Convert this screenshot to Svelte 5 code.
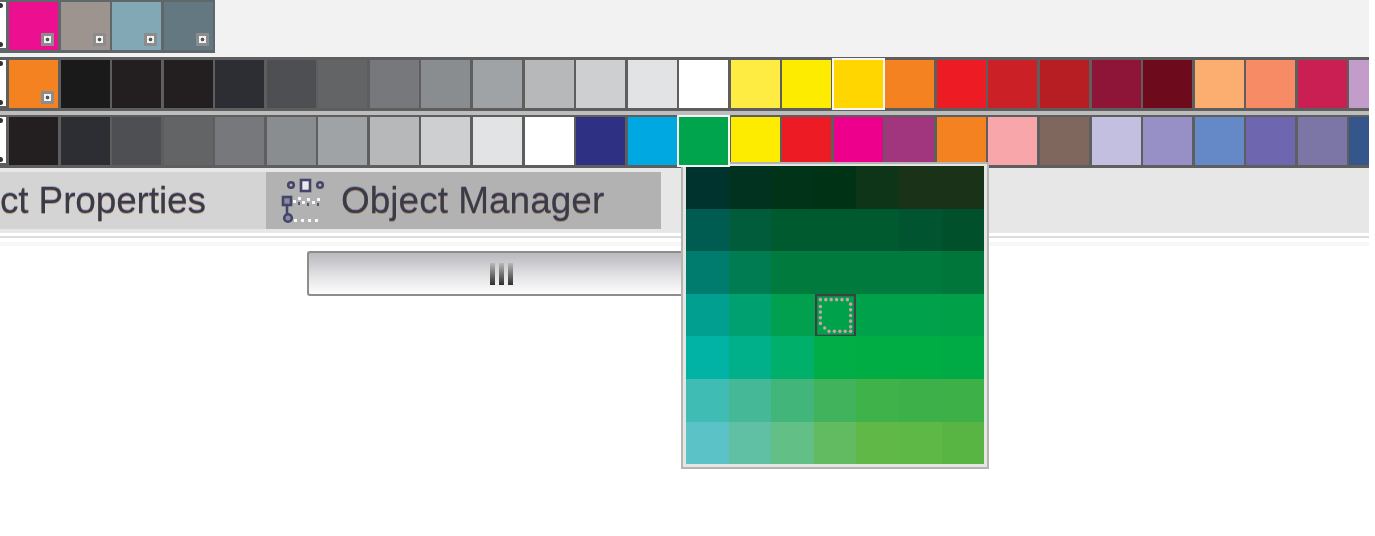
<script>
  const topRow = ['#ec0f8f', '#9d9490', '#83a8b5', '#637880'];
  const midRow = [
    '#f58220', '#1a1a1a', '#231f20', '#231f20', '#2d2e33', '#4d4f53', '#636466', '#77787b', '#8a8d8f',
    '#a0a3a5', '#b6b8ba', '#cdcfd1', '#e2e3e5', '#ffffff', '#ffec42', '#fdeb00', '#ffd600', '#f58220',
    '#ed1c24', '#cb2026', '#b61e23', '#8e1537', '#6d0a1c', '#fbae6f', '#f68b66', '#c91f52', '#c39dc9'
  ];
  const lowRow = [
    '#231f20', '#2d2e33', '#4d4f53', '#636466', '#77787b', '#8a8d8f', '#a0a3a5', '#b6b8ba', '#cdcfd1',
    '#e2e3e5', '#ffffff', '#2e3084', '#00a8e2', '#00a44d', '#fdeb00', '#ed1c24', '#ec008c', '#a1367f',
    '#f58220', '#f9a6aa', '#7f675e', '#c3bfe0', '#9690c6', '#6588c7', '#6e66ae', '#7b76a6', '#35568a'
  ];
  const shades = [
    ['#00332e', '#00321f', '#003318', '#003316', '#0f3518', '#1a3318', '#1a3318'],
    ['#005c50', '#005c3a', '#005a30', '#005a30', '#005a30', '#005530', '#00512b'],
    ['#007c6e', '#007c52', '#007a3d', '#007a3d', '#007a3d', '#007a3d', '#00763b'],
    ['#009f8f', '#00a070', '#00a04e', '#00a14b', '#00a14b', '#00a14b', '#00a049'],
    ['#00b3a4', '#00b08a', '#00b06a', '#00ad47', '#00ad45', '#00ad45', '#00ab45'],
    ['#3fbcb4', '#45b898', '#42b57a', '#41b35c', '#3fb24a', '#3db04a', '#3db048'],
    ['#5bc2c8', '#5fc0a4', '#62bf86', '#62bb60', '#60b946', '#5eb846', '#58b544']
  ];
  // dots of the marching ring on the current shade, clipped at two corners
  const ring = [
    [5, 5], [10, 5], [15, 5], [20, 5], [25, 5], [30, 5], [33, 9],
    [33, 14], [33, 19], [33, 24], [33, 29], [33, 33],
    [28, 33], [23, 33], [18, 33], [13, 33], [9, 30],
    [5, 26], [5, 21], [5, 16], [5, 11]
  ];
</script>

<div class="page">
  <div class="panel">
    <div class="top">
      <div class="row first">
        <span class="stub"></span>
        {#each topRow as c}
          <span class="swatch" style:background={c}><i class="mark"></i></span>
        {/each}
      </div>
    </div>

    <div class="row mid">
      <span class="stub"></span>
      {#each midRow as c, i}
        <span class="swatch" class:picked={i === 16} style:background={c}>
          {#if i === 0}<i class="mark"></i>{/if}
        </span>
      {/each}
    </div>

    <div class="row low">
      <span class="stub"></span>
      {#each lowRow as c, i}
        <span class="swatch" class:picked={i === 13} style:background={c}></span>
      {/each}
    </div>

    <div class="tabs">
      <div class="tab plain"><span>ct Properties</span></div>
      <div class="tab active">
        <svg width="46" height="46" viewBox="0 0 46 46">
          <g fill="none" stroke="#45456a" stroke-width="2.6">
            <circle cx="11" cy="7" r="2.8" />
            <rect x="21" y="2" width="9" height="11" fill="#e8e8ee" />
            <circle cx="40" cy="7" r="2.8" />
            <rect x="3" y="19" width="8" height="8" fill="#8b8ba8" />
            <path d="M7 27v9" />
            <circle cx="8" cy="40" r="3.8" fill="#8b8ba8" />
          </g>
          <g fill="#f7f7f7">
            <rect x="13" y="22" width="3" height="3" />
            <rect x="18" y="19" width="3" height="3" />
            <rect x="22" y="23" width="3" height="3" />
            <rect x="27" y="20" width="3" height="3" />
            <rect x="32" y="23" width="3" height="3" />
            <rect x="37" y="20" width="3" height="3" />
            <rect x="14" y="41" width="3" height="3" />
            <rect x="21" y="41" width="3" height="3" />
            <rect x="28" y="41" width="3" height="3" />
            <rect x="35" y="41" width="3" height="3" />
          </g>
          <g fill="#55556e">
            <rect x="18" y="24" width="2" height="3" />
            <rect x="27" y="25" width="2" height="3" />
            <rect x="37" y="25" width="2" height="3" />
          </g>
        </svg>
        <span>Object Manager</span>
      </div>
    </div>

    <div class="rule"></div>

    <div class="thumb">
      <span class="grip"><i></i><i></i><i></i></span>
    </div>
  </div>

  <div class="popup">
    {#each shades as line, r}
      {#each line as c, k}
        <span class="cell" style:background={c}>
          {#if r === 3 && k === 3}
            <svg class="current" width="41" height="43" viewBox="0 0 38 38" preserveAspectRatio="none">
              <rect x="1" y="1" width="36" height="36" fill="none" stroke="#3d4143" stroke-width="2" />
              {#each ring as [x, y]}
                <circle cx={x} cy={y} r="1.6" fill="#c9a2a2" />
              {/each}
            </svg>
          {/if}
        </span>
      {/each}
    {/each}
  </div>
</div>

<style>
  :global(body) {
    margin: 0;
    background: #fff;
  }
  .page {
    position: relative;
    width: 1375px;
    height: 536px;
    overflow: hidden;
    background: #fff;
    filter: blur(0.6px);
  }
  .panel {
    width: 1369px;
  }
  .top {
    height: 57px;
    background: #f2f2f2;
  }
  .row {
    display: flex;
    gap: 2.55px;
    overflow: hidden;
    background: #5e5e5e;
  }
  .first {
    width: 215px;
    height: 53px;
    padding-top: 2px;
    box-sizing: border-box;
    background: #5f676b;
  }
  .mid {
    height: 58px;
    padding-top: 3px;
    box-sizing: border-box;
    border-bottom: 4px solid #bdbdbd;
  }
  .low {
    height: 53px;
    padding-top: 2px;
    box-sizing: border-box;
  }
  .stub {
    position: relative;
    flex: none;
    width: 6px;
    height: 46px;
    margin-right: 0.5px;
    background: #fff;
  }
  .stub::before,
  .stub::after {
    content: '';
    position: absolute;
    left: -2px;
    width: 5px;
    height: 5px;
    border-radius: 50%;
    background: #333;
  }
  .stub::before {
    top: 1px;
  }
  .stub::after {
    bottom: 1px;
  }
  .swatch {
    position: relative;
    flex: none;
    width: 49px;
    height: 48px;
  }
  .picked {
    outline: 2px solid #f6f6f6;
    z-index: 1;
  }
  .mark {
    position: absolute;
    right: 4px;
    bottom: 4px;
    width: 7px;
    height: 7px;
    border: 3px solid #8c8c8c;
    background: radial-gradient(circle, #555 0 1.5px, #f2f2f2 2.2px);
  }
  .tabs {
    display: flex;
    height: 65px;
    padding-top: 4px;
    box-sizing: border-box;
    background: #e8e7e8;
  }
  .tab {
    display: flex;
    align-items: center;
    height: 57px;
    box-sizing: border-box;
    font-family: 'Liberation Sans', Arial, sans-serif;
    font-size: 37px;
    color: #3b3b46;
    white-space: nowrap;
    text-shadow: 0 1px 0 rgba(150, 80, 30, 0.45), 0 -1px 0 rgba(60, 70, 160, 0.35);
  }
  .plain {
    width: 266px;
    background: #d4d4d4;
    letter-spacing: -0.15px;
  }
  .active {
    width: 395px;
    gap: 15px;
    padding-left: 14px;
    background: #b2b2b2;
  }
  .active svg {
    flex: none;
  }
  .rule {
    height: 14px;
    background: linear-gradient(#fff 0 3px, #dcdcdc 3px 5px, #fff 5px 9px, #f7f7f7 9px 13px, #fff 13px);
  }
  .thumb {
    display: flex;
    justify-content: center;
    align-items: center;
    width: 386px;
    height: 45px;
    margin: 4px 0 0 307px;
    box-sizing: border-box;
    border: 2px solid #8d8d8d;
    border-width: 2px 0 2px 2px;
    border-radius: 3px;
    background: linear-gradient(#b9b9be, #e6e6e8 60%, #fcfcfc);
  }
  .grip {
    display: flex;
    gap: 4px;
  }
  .grip i {
    width: 5px;
    height: 22px;
    background: linear-gradient(#b8b8b8, #2e2e2e);
  }
  .popup {
    position: absolute;
    left: 681px;
    top: 162px;
    display: grid;
    grid-template-columns: repeat(7, 42.6px);
    grid-auto-rows: 42.6px;
    padding: 2px 3px 3px;
    border: 2px solid #b4b4b4;
    background: #e4e6e2;
  }
  .cell {
    position: relative;
  }
  .current {
    position: absolute;
    left: 1px;
    top: 0;
    display: block;
  }
</style>
